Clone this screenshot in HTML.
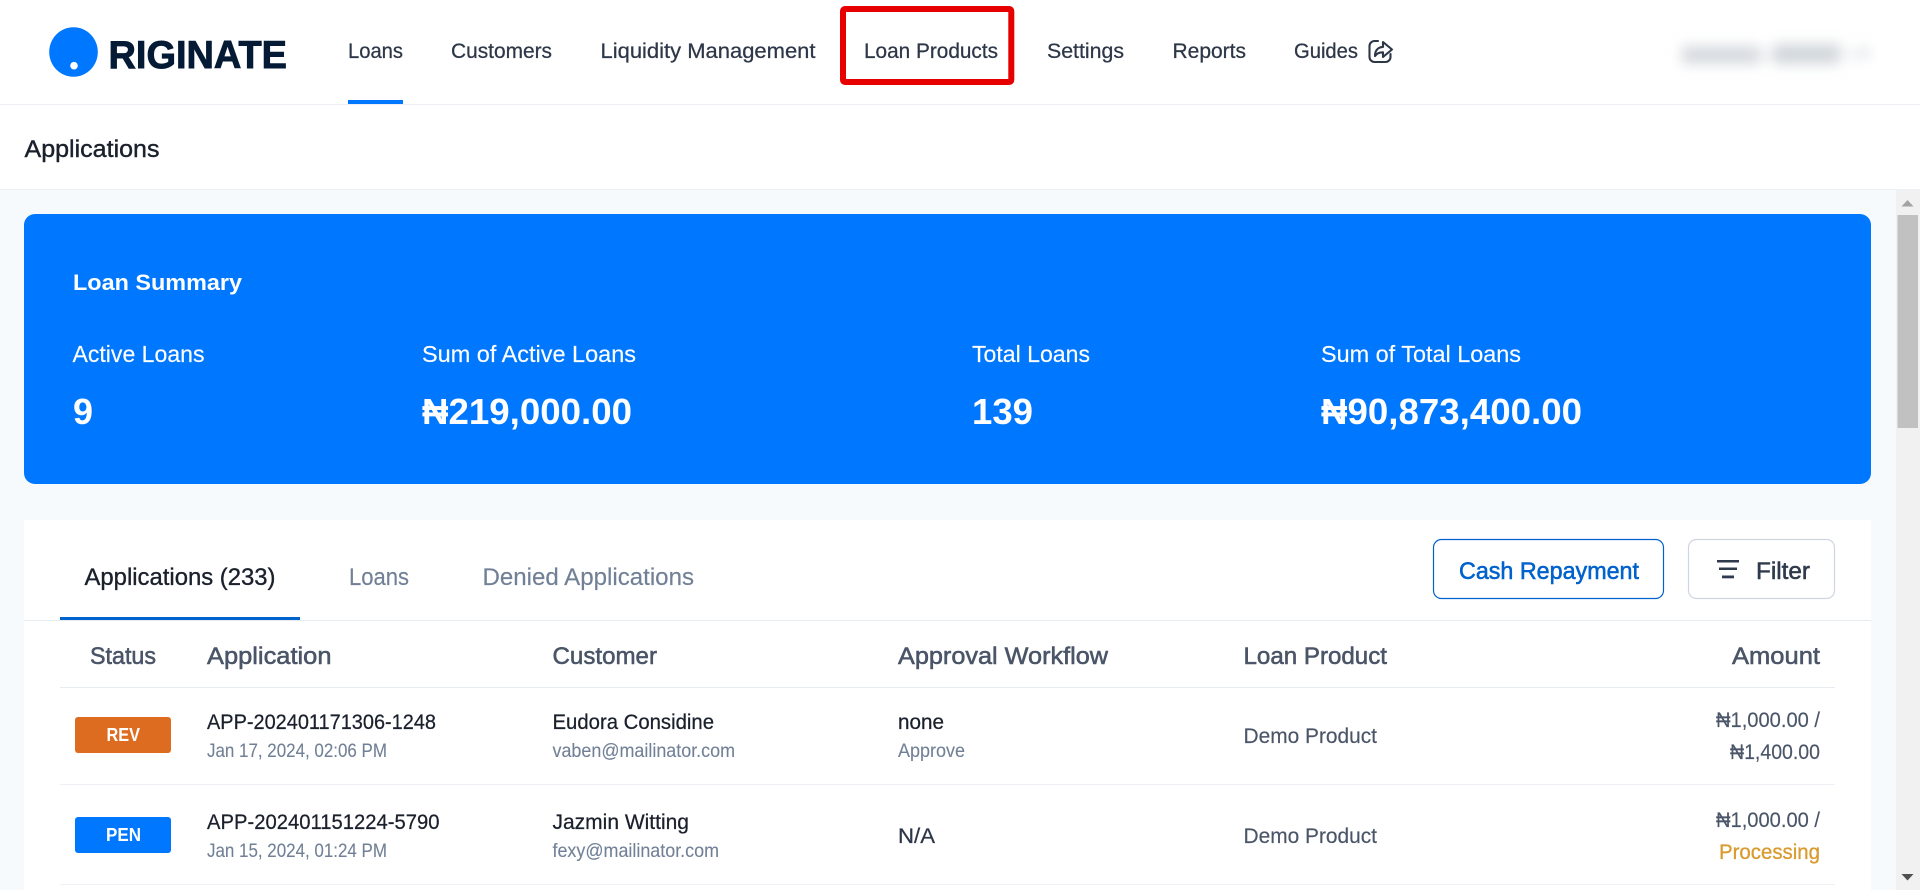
<!DOCTYPE html>
<html lang="en">
<head>
<meta charset="utf-8">
<title>Applications</title>
<style>
html,body{margin:0;padding:0;width:1920px;height:890px;overflow:hidden;background:#fff}
svg{display:block}
text{font-family:"Liberation Sans","Noto Sans CJK JP",sans-serif}
.nav{font-size:21px;fill:#2d3748;stroke:#2d3748;stroke-width:.25px}
.lbl{font-size:23px;fill:#fff;stroke:#fff;stroke-width:.15px}
.val{font-size:36px;font-weight:700;fill:#fff}
.tab{font-size:24px;fill:#718096;stroke:#718096;stroke-width:.15px}
.th{font-size:24px;fill:#4a5568;stroke:#4a5568;stroke-width:.55px}
.main{font-size:21.5px;fill:#1a202c;stroke:#1a202c;stroke-width:.25px}
.sub{font-size:19.5px;fill:#718096;stroke:#718096;stroke-width:.1px}
.cell{font-size:21px;fill:#4a5568;stroke:#4a5568;stroke-width:.15px}
.amt{font-size:21px;fill:#4a5568;stroke:#4a5568;stroke-width:.15px}
.badge{font-size:18px;font-weight:700;fill:#fff}
</style>
</head>
<body>
<svg width="1920" height="890" viewBox="0 0 1920 890" xmlns="http://www.w3.org/2000/svg">
<defs>
<filter id="b" x="-20%" y="-150%" width="140%" height="400%"><feGaussianBlur stdDeviation="6.500"/></filter>
</defs>

<!-- backgrounds -->
<rect x="0" y="0" width="1920" height="890" fill="#f7fafc"/>
<rect x="0" y="0" width="1920" height="189" fill="#fff"/>
<rect x="0" y="104" width="1920" height="1" fill="#edf0f5"/>
<rect x="0" y="189" width="1920" height="1" fill="#edf0f5"/>

<!-- logo -->
<ellipse cx="73.500" cy="52" rx="24.300" ry="24.700" fill="#0077ff"/>
<circle cx="74" cy="65.700" r="3.800" fill="#fff"/>
<text x="108.500" y="68" font-size="39" font-weight="700" fill="#051b35" stroke="#051b35" stroke-width=".9" textLength="178.500" lengthAdjust="spacingAndGlyphs">RIGINATE</text>

<!-- nav -->
<text class="nav" x="348" y="58" textLength="55" lengthAdjust="spacingAndGlyphs">Loans</text>
<rect x="348" y="100" width="55" height="4" fill="#0077ff"/>
<text class="nav" x="451" y="58" textLength="101" lengthAdjust="spacingAndGlyphs">Customers</text>
<text class="nav" x="600.500" y="58" textLength="215" lengthAdjust="spacingAndGlyphs">Liquidity Management</text>
<text class="nav" x="864" y="58" textLength="134" lengthAdjust="spacingAndGlyphs">Loan Products</text>
<text class="nav" x="1047" y="58" textLength="77" lengthAdjust="spacingAndGlyphs">Settings</text>
<text class="nav" x="1172.500" y="58" textLength="73.500" lengthAdjust="spacingAndGlyphs">Reports</text>
<text class="nav" x="1294" y="58" textLength="64" lengthAdjust="spacingAndGlyphs">Guides</text>
<g fill="none" stroke="#2d3748" stroke-width="2.100" stroke-linecap="round" stroke-linejoin="round">
<path d="M1378 41h-3.500a5 5 0 0 0-5 5v11a5 5 0 0 0 5 5h11a5 5 0 0 0 5-5v-3"/>
<path d="M1375 56c0-5 2.500-8.800 8-9.100v-4.900l9 7.500-9 7.500v-4.700c-3.500 0-6.200 1-8 3.700z"/>
</g>

<!-- red highlight -->
<rect x="843" y="9" width="168.300" height="73" rx="2" fill="none" stroke="#e60000" stroke-width="6"/>

<!-- blurred user -->
<g filter="url(#b)">
<rect x="1682" y="46" width="78" height="18" fill="#d6dadf"/>
<rect x="1758" y="50" width="18" height="10" fill="#eceef0"/>
<rect x="1774" y="44" width="66" height="20" fill="#d2d7dc"/>
<rect x="1838" y="50" width="20" height="8" fill="#f0f1f3"/>
<rect x="1859" y="48" width="10" height="10" fill="#dfe2e6"/>
</g>

<!-- page title -->
<text x="24.500" y="157" font-size="24" fill="#1a202c" stroke="#1a202c" stroke-width=".4" textLength="135" lengthAdjust="spacingAndGlyphs">Applications</text>

<!-- summary card -->
<rect x="24" y="214" width="1847" height="270" rx="11" fill="#0077ff"/>
<text x="73" y="290" font-size="22" font-weight="700" fill="#fff" textLength="169" lengthAdjust="spacingAndGlyphs">Loan Summary</text>
<text class="lbl" x="72.500" y="362" textLength="132" lengthAdjust="spacingAndGlyphs">Active Loans</text>
<text class="lbl" x="422" y="362" textLength="214" lengthAdjust="spacingAndGlyphs">Sum of Active Loans</text>
<text class="lbl" x="972" y="362" textLength="118" lengthAdjust="spacingAndGlyphs">Total Loans</text>
<text class="lbl" x="1321" y="362" textLength="200" lengthAdjust="spacingAndGlyphs">Sum of Total Loans</text>
<text class="val" x="73" y="424" textLength="20" lengthAdjust="spacingAndGlyphs">9</text>
<text class="val" x="422" y="424" textLength="210" lengthAdjust="spacingAndGlyphs">₦219,000.00</text>
<text class="val" x="972" y="424" textLength="61" lengthAdjust="spacingAndGlyphs">139</text>
<text class="val" x="1321" y="424" textLength="261" lengthAdjust="spacingAndGlyphs">₦90,873,400.00</text>

<!-- panel -->
<rect x="24" y="520" width="1847" height="370" fill="#fff"/>
<rect x="24" y="620" width="1847" height="1" fill="#e7ecf1"/>
<text class="tab" x="84.500" y="585" style="fill:#1a202c;stroke:#1a202c;stroke-width:.35px" textLength="191" lengthAdjust="spacingAndGlyphs">Applications (233)</text>
<rect x="60" y="617" width="240" height="3" fill="#0062cc"/>
<text class="tab" x="349" y="585" textLength="60" lengthAdjust="spacingAndGlyphs">Loans</text>
<text class="tab" x="482.500" y="585" textLength="211.500" lengthAdjust="spacingAndGlyphs">Denied Applications</text>

<!-- buttons -->
<rect x="1433.500" y="539.500" width="230" height="59" rx="8" fill="#fff" stroke="#0062cc" stroke-width="1.200"/>
<text x="1459" y="579" font-size="24" fill="#0062cc" stroke="#0062cc" stroke-width=".55" textLength="180" lengthAdjust="spacingAndGlyphs">Cash Repayment</text>
<rect x="1688.500" y="539.500" width="146" height="59" rx="8" fill="#fff" stroke="#cfd6e0" stroke-width="1.200"/>
<g fill="#2f3b4c">
<rect x="1717" y="560" width="22" height="2.500"/>
<rect x="1719" y="567.500" width="18" height="2.500"/>
<rect x="1722" y="575.500" width="12" height="2.800"/>
</g>
<text x="1756" y="579" font-size="24" fill="#2f3b4c" stroke="#2f3b4c" stroke-width=".55" textLength="54" lengthAdjust="spacingAndGlyphs">Filter</text>

<!-- table head -->
<text class="th" x="90" y="664" textLength="66" lengthAdjust="spacingAndGlyphs">Status</text>
<text class="th" x="207" y="664" textLength="124.500" lengthAdjust="spacingAndGlyphs">Application</text>
<text class="th" x="552.500" y="664" textLength="104.500" lengthAdjust="spacingAndGlyphs">Customer</text>
<text class="th" x="898" y="664" textLength="210" lengthAdjust="spacingAndGlyphs">Approval Workflow</text>
<text class="th" x="1243.500" y="664" textLength="143.500" lengthAdjust="spacingAndGlyphs">Loan Product</text>
<text class="th" x="1732" y="664" textLength="88" lengthAdjust="spacingAndGlyphs">Amount</text>
<rect x="60" y="687" width="1775" height="1" fill="#e7ecf1"/>

<!-- row 1 -->
<rect x="75" y="717" width="96" height="36" rx="3" fill="#de6c20"/>
<text class="badge" x="106.500" y="741" textLength="33.500" lengthAdjust="spacingAndGlyphs">REV</text>
<text class="main" x="207" y="729" textLength="229" lengthAdjust="spacingAndGlyphs">APP-202401171306-1248</text>
<text class="sub" x="207" y="757" textLength="180" lengthAdjust="spacingAndGlyphs">Jan 17, 2024, 02:06 PM</text>
<text class="main" x="552.500" y="729" textLength="161.500" lengthAdjust="spacingAndGlyphs">Eudora Considine</text>
<text class="sub" x="552.500" y="757" textLength="182.500" lengthAdjust="spacingAndGlyphs">vaben@mailinator.com</text>
<text class="main" x="898" y="729" textLength="46" lengthAdjust="spacingAndGlyphs">none</text>
<text class="sub" x="898" y="757" textLength="67" lengthAdjust="spacingAndGlyphs">Approve</text>
<text class="cell" x="1243.500" y="743" textLength="133.500" lengthAdjust="spacingAndGlyphs">Demo Product</text>
<text class="amt" x="1716" y="727" textLength="104" lengthAdjust="spacingAndGlyphs">₦1,000.00 /</text>
<text class="amt" x="1730" y="759" textLength="90" lengthAdjust="spacingAndGlyphs">₦1,400.00</text>
<rect x="60" y="784" width="1775" height="1" fill="#edf1f5"/>

<!-- row 2 -->
<rect x="75" y="817" width="96" height="36" rx="3" fill="#0077ff"/>
<text class="badge" x="106" y="841" textLength="35" lengthAdjust="spacingAndGlyphs">PEN</text>
<text class="main" x="207" y="829" textLength="232.500" lengthAdjust="spacingAndGlyphs">APP-202401151224-5790</text>
<text class="sub" x="207" y="857" textLength="180" lengthAdjust="spacingAndGlyphs">Jan 15, 2024, 01:24 PM</text>
<text class="main" x="552.500" y="829" textLength="136.500" lengthAdjust="spacingAndGlyphs">Jazmin Witting</text>
<text class="sub" x="552.500" y="857" textLength="166.500" lengthAdjust="spacingAndGlyphs">fexy@mailinator.com</text>
<text class="main" x="898" y="843" style="fill:#2d3748;stroke:#2d3748" textLength="37" lengthAdjust="spacingAndGlyphs">N/A</text>
<text class="cell" x="1243.500" y="843" textLength="133.500" lengthAdjust="spacingAndGlyphs">Demo Product</text>
<text class="amt" x="1716" y="827" textLength="104" lengthAdjust="spacingAndGlyphs">₦1,000.00 /</text>
<text class="amt" x="1719" y="859" style="fill:#d99a2e;stroke:#d99a2e;stroke-width:.3px" textLength="101" lengthAdjust="spacingAndGlyphs">Processing</text>
<rect x="60" y="884" width="1775" height="1" fill="#edf1f5"/>

<!-- scrollbar -->
<rect x="1896" y="190" width="24" height="700" fill="#f1f1f1"/>
<rect x="1897.500" y="215" width="20.500" height="213" fill="#c1c1c1"/>
<path d="M1901.500 206.500l6-6.500 6 6.500z" fill="#a3a3a3"/>
<path d="M1901.500 874h12l-6 6.500z" fill="#505050"/>
</svg>
</body>
</html>
